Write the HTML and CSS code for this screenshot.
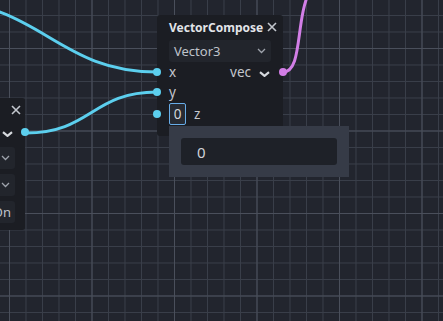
FILE: index.html
```html
<!DOCTYPE html>
<html lang="en">
<head>
    <meta charset="UTF-8">
    <meta name="viewport" content="width=device-width, initial-scale=1.0">
    <title>Graph</title>
    <link rel="stylesheet" href="styles.css">
</head>
<body>
    <main class="canvas">
        <svg class="wires" width="443" height="321" viewBox="0 0 443 321">
            <path class="wire float" d="M -60 2 C 40 2, 57 72, 157 72"/>
            <path class="wire float" d="M 26 133 C 91 133, 92 92, 157 92"/>
            <path class="wire vector" d="M 283 72 C 303 72, 295 20, 310 -10"/>
        </svg>

        <!-- node cut by the left edge -->
        <div class="node node-left">
            <div class="node-title">
                <span></span>
                <svg class="close" width="10" height="10" viewBox="0 0 10 10"><path d="M1 1 L9 9 M9 1 L1 9"/></svg>
            </div>
            <div class="row out-row">
                <svg class="expand" width="11" height="6" viewBox="0 0 11 6"><path d="M1 1.2 L5.5 4.8 L10 1.2"/></svg>
                <span class="port port-float port-out"></span>
            </div>
            <div class="select"><span></span><svg class="chev" width="9" height="6" viewBox="0 0 9 6"><path d="M1 1 L4.5 4.5 L8 1"/></svg></div>
            <div class="select"><span></span><svg class="chev" width="9" height="6" viewBox="0 0 9 6"><path d="M1 1 L4.5 4.5 L8 1"/></svg></div>
            <div class="select text-right"><span>On</span></div>
        </div>

        <div class="node node-vc">
            <div class="node-title">
                <span>VectorCompose</span>
                <svg class="close" width="10" height="10" viewBox="0 0 10 10"><path d="M1 1 L9 9 M9 1 L1 9"/></svg>
            </div>
            <div class="select">
                <span>Vector3</span>
                <svg class="chev" width="9" height="6" viewBox="0 0 9 6"><path d="M1 1 L4.5 4.5 L8 1"/></svg>
            </div>
            <div class="row">
                <span class="port port-float port-in"></span>
                <span>x</span>
                <span class="out-group">
                    <span>vec</span>
                    <svg class="expand" width="11" height="6" viewBox="0 0 11 6"><path d="M1 1.2 L5.5 4.8 L10 1.2"/></svg>
                </span>
                <span class="port port-vec port-out"></span>
            </div>
            <div class="row">
                <span class="port port-float port-in"></span>
                <span>y</span>
            </div>
            <div class="row row-z">
                <span class="port port-float port-in"></span>
                <span class="num-box">0</span>
                <span>z</span>
            </div>
        </div>

        <div class="popup">
            <div class="popup-input">0</div>
        </div>
    </main>
</body>
</html>
```

FILE: styles.css
```css
body{
    margin: 0;
    background-color: #22252e;
}
.canvas{
    position: relative;
    width: 443px;
    height: 321px;
    overflow: hidden;
    font-family: "Noto Sans", "Open Sans", sans-serif;
    background-color: #22252e;
    background-image:
        linear-gradient(to right, #4a4f5b 1px, transparent 1px),
        linear-gradient(to bottom, #4a4f5b 1px, transparent 1px),
        linear-gradient(to right, #393e49 1px, transparent 1px),
        linear-gradient(to bottom, #393e49 1px, transparent 1px);
    background-size: 82.5px 82.5px, 82.5px 82.5px, 16.5px 16.5px, 16.5px 16.5px;
    background-position: 9px 0, 0 48px, 9px 0, 0 15px;
}
.wires{
    position: absolute;
    left: 0;
    top: 0;
}
.wire{
    fill: none;
    stroke-width: 3;
    stroke-linecap: round;
}
.wire.float{
    stroke: #5ccfee;
}
.wire.vector{
    stroke: #d27ee6;
}

.node{
    position: absolute;
    box-sizing: border-box;
    background-color: #1b1d23;
    border-radius: 3px;
    color: #c3c7ce;
    font-size: 13.5px;
}
.node-vc{
    left: 157px;
    top: 15px;
    width: 126px;
    height: 121px;
    padding: 0 12px;
}
.node-left{
    left: -100px;
    top: 98px;
    width: 125px;
    height: 132px;
    padding: 0 10px 0 12px;
}
.node-title{
    height: 24px;
    display: flex;
    align-items: center;
    justify-content: space-between;
    margin-right: -6px;
    font-size: 12px;
    font-weight: bold;
    color: #e2e4e8;
    white-space: nowrap;
}
.close{
    flex-shrink: 0;
}
.close path{
    stroke: #c3c7ce;
    stroke-width: 1.6;
    fill: none;
}
.select{
    height: 22px;
    margin-top: 1px;
    display: flex;
    align-items: center;
    justify-content: space-between;
    padding: 0 5px;
    background-color: #22252c;
    border-radius: 3px;
    font-size: 13px;
    color: #bfc3ca;
}
.node-left .select{
    margin-top: 5px;
    padding-right: 5px;
}
.select.text-right{
    justify-content: flex-end;
    padding-right: 4px;
}
.chev path{
    stroke: #9ea3ac;
    stroke-width: 1.3;
    fill: none;
}
.expand path{
    stroke: #d6d9de;
    stroke-width: 2.2;
    fill: none;
    stroke-linejoin: round;
}
.row{
    position: relative;
    height: 20px;
    display: flex;
    align-items: center;
}
.row-z{
    height: 22px;
    margin-top: 1px;
    gap: 8px;
}
.out-row{
    justify-content: flex-end;
    padding-right: 2px;
}
.out-group{
    margin-left: auto;
    display: flex;
    align-items: center;
    gap: 8px;
    padding-right: 1px;
}
.out-group .expand,
.out-row .expand{
    margin-top: 3px;
}
.port{
    position: absolute;
    top: 50%;
    width: 8px;
    height: 8px;
    margin-top: -4px;
    border-radius: 50%;
}
.port-float{
    background-color: #5ccfee;
}
.port-vec{
    background-color: #d27ee6;
}
.port-in{
    left: -16px;
}
.node-vc .port-out{
    right: -16px;
}
.node-left .port-out{
    right: -14px;
}
.num-box{
    box-sizing: border-box;
    width: 17px;
    height: 22px;
    display: flex;
    align-items: center;
    justify-content: center;
    border: 1px solid #68ade9;
    border-radius: 2px;
    background-color: #272b33;
    color: #d4d7dc;
}

.popup{
    position: absolute;
    left: 169px;
    top: 126px;
    width: 180px;
    height: 51px;
    box-sizing: border-box;
    padding: 12px;
    background-color: #363b47;
}
.popup-input{
    height: 27px;
    display: flex;
    align-items: center;
    padding-left: 16px;
    background-color: #1e2128;
    border-radius: 3px;
    font-size: 15px;
    color: #cfd2d8;
}
```
